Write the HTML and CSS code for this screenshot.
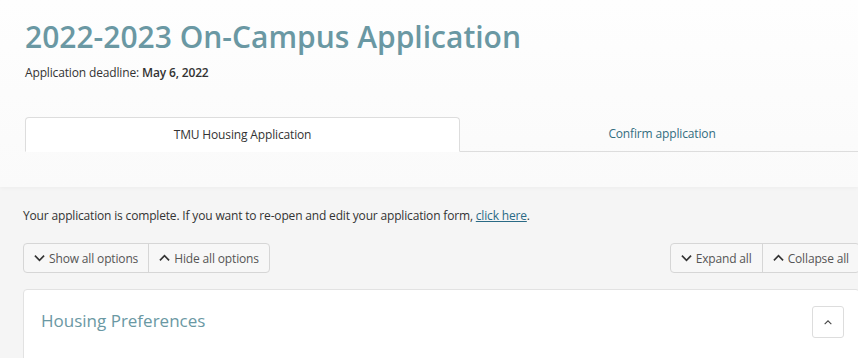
FILE: index.html
```html
<!DOCTYPE html>
<html lang="en">
<head>
    <meta charset="UTF-8">
    <meta name="viewport" content="width=device-width, initial-scale=1.0">
    <title>2022-2023 On-Campus Application</title>
    <link rel="stylesheet" href="styles.css">
</head>
<body>
    <div class="page-header">
        <h1>2022-2023 On-Campus Application</h1>
        <p class="deadline">Application deadline: <strong>May 6, 2022</strong></p>

        <div class="tabs">
            <div class="tab active">TMU Housing Application</div>
            <div class="tab">Confirm application</div>
        </div>
    </div>

    <div class="content">
        <p class="notice">Your application is complete. If you want to re-open and edit your application form, <a href="#">click here</a>.</p>

        <div class="toolbar">
            <div class="btn-group">
                <button class="btn">
                    <svg class="chev" viewBox="0 0 12 8"><path d="M1 1.5l5 5 5-5"/></svg>
                    Show all options
                </button>
                <button class="btn">
                    <svg class="chev" viewBox="0 0 12 8"><path d="M1 6.5l5-5 5 5"/></svg>
                    Hide all options
                </button>
            </div>
            <div class="btn-group">
                <button class="btn">
                    <svg class="chev" viewBox="0 0 12 8"><path d="M1 1.5l5 5 5-5"/></svg>
                    Expand all
                </button>
                <button class="btn">
                    <svg class="chev" viewBox="0 0 12 8"><path d="M1 6.5l5-5 5 5"/></svg>
                    Collapse all
                </button>
            </div>
        </div>

        <div class="panel">
            <div class="panel-head">
                <h2>Housing Preferences</h2>
                <button class="toggle">
                    <svg viewBox="0 0 12 8"><path d="M2 6l4-4 4 4"/></svg>
                </button>
            </div>
        </div>
    </div>
</body>
</html>
```

FILE: styles.css
```css
html, body {
    margin: 0;
    padding: 0;
}
body {
    font-family: 'Open Sans', 'Noto Sans', Arial, sans-serif;
    font-size: 12px;
    color: #333;
    background: #f5f5f5;
    overflow: hidden;
    width: 858px;
}
.page-header {
    background: linear-gradient(#fefefe, #fafafa);
    padding: 17px 0 35px 25px;
    box-shadow: 0 1px 4px rgba(0, 0, 0, 0.04);
}
h1 {
    margin: 0;
    font-size: 30px;
    font-weight: 600;
    line-height: 40px;
    color: #6a98a3;
}
.deadline {
    margin: 7px 0 0;
    line-height: 17px;
    letter-spacing: -0.15px;
}
.deadline strong {
    font-weight: 600;
}
.tabs {
    display: flex;
    margin-top: 36px;
    width: 839px;
    border-bottom: 1px solid #ddd;
}
.tab {
    flex: 1 1 auto;
    height: 34px;
    line-height: 34px;
    text-align: center;
    font-size: 12px;
    letter-spacing: -0.15px;
    color: #336d80;
    margin-bottom: -1px;
}
.tab.active {
    flex: 0 0 435px;
    background: #fff;
    color: #333;
    border: 1px solid #ddd;
    border-bottom-color: #fff;
    border-radius: 4px 4px 0 0;
    box-sizing: border-box;
    height: 35px;
    line-height: 33px;
}
.content {
    padding: 0 0 0 23px;
    width: 837px;
}
.notice {
    margin: 20px 0 0;
    line-height: 17px;
    letter-spacing: -0.17px;
}
.notice a {
    color: #2a6a85;
}
.toolbar {
    display: flex;
    justify-content: space-between;
    margin-top: 19px;
}
.btn-group {
    display: flex;
    border: 1px solid #d6d6d6;
    border-radius: 4px;
    background: #f7f7f7;
}
.btn {
    font-family: inherit;
    font-size: 12px;
    letter-spacing: -0.15px;
    color: #555;
    background: none;
    border: none;
    height: 28px;
    padding: 0 10px;
    display: flex;
    align-items: center;
    gap: 4px;
    cursor: pointer;
}
.btn + .btn {
    border-left: 1px solid #d6d6d6;
}
.chev {
    width: 11px;
    height: 8px;
    fill: none;
    stroke: #333;
    stroke-width: 1.8;
}
.panel {
    margin-top: 16px;
    background: #fff;
    border: 1px solid #e2e2e2;
    border-radius: 4px;
    height: 120px;
}
.panel-head {
    display: flex;
    justify-content: space-between;
    align-items: center;
    padding: 16px 15px 0 17px;
}
h2 {
    margin: -3px 0 0;
    font-size: 17px;
    font-weight: 400;
    color: #6a98a3;
}
.toggle {
    width: 32px;
    height: 32px;
    border: 1px solid #ddd;
    border-radius: 3px;
    background: #fff;
    display: flex;
    align-items: center;
    justify-content: center;
    padding: 0;
}
.toggle svg {
    width: 10px;
    height: 7px;
    fill: none;
    stroke: #444;
    stroke-width: 1.3;
}
```
